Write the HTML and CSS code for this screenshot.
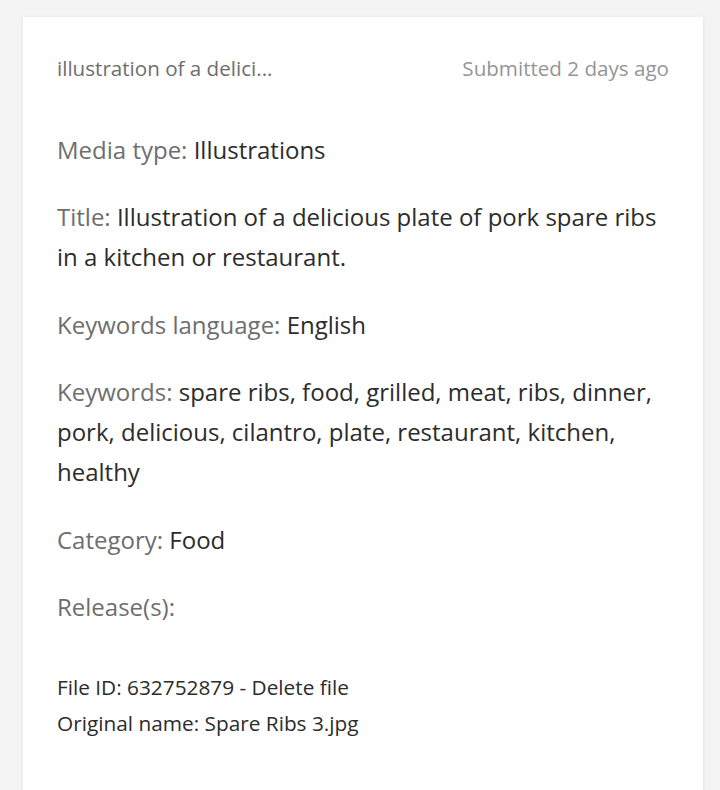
FILE: index.html
```html
<!DOCTYPE html>
<html>
<head>
<meta charset="utf-8">
<link rel="stylesheet" href="styles.css">
</head>
<body>
<div class="card">
  <div class="head">
    <span class="name">illustration of a delici...</span>
    <span class="when">Submitted 2 days ago</span>
  </div>
  <div class="fields">
    <p class="field"><span class="label">Media type:</span> Illustrations</p>
    <p class="field"><span class="label">Title:</span> Illustration of a delicious plate of pork spare ribs in a kitchen or restaurant.</p>
    <p class="field"><span class="label">Keywords language:</span> English</p>
    <p class="field"><span class="label">Keywords:</span> spare ribs, food, grilled, meat, ribs, dinner, pork, delicious, cilantro, plate, restaurant, kitchen, healthy</p>
    <p class="field"><span class="label">Category:</span> Food</p>
    <p class="field"><span class="label">Release(s):</span></p>
  </div>
  <div class="meta">
    <div>File ID: 632752879 - Delete file</div>
    <div>Original name: Spare Ribs 3.jpg</div>
  </div>
</div>
</body>
</html>
```

FILE: styles.css
```css
html, body {
  margin: 0;
  padding: 0;
  background: #f3f3f3;
  height: 100%;
  overflow: hidden;
}
body {
  font-family: "Open Sans", "Lato", sans-serif;
  padding: 17px 17px 0 23px;
}
.card {
  background: #fff;
  box-shadow: 0 1px 4px rgba(0,0,0,0.08);
  padding: 39px 34px 60px 34px;
  min-height: 800px;
  box-sizing: border-box;
}
.head {
  display: flex;
  justify-content: space-between;
  align-items: center;
  font-size: 20.6px;
  line-height: 24px;
}
.name { color: #6e6e6e; }
.when { color: #959595; }
.fields {
  margin-top: 50px;
}
.field {
  margin: 0 0 27.4px 0;
  font-size: 24px;
  line-height: 40px;
  color: #2c2c2c;
}
.label { color: #6e6e6e; }
.meta {
  margin-top: 42px;
  font-size: 20.8px;
  line-height: 36px;
  color: #2c2c2c;
}
```
